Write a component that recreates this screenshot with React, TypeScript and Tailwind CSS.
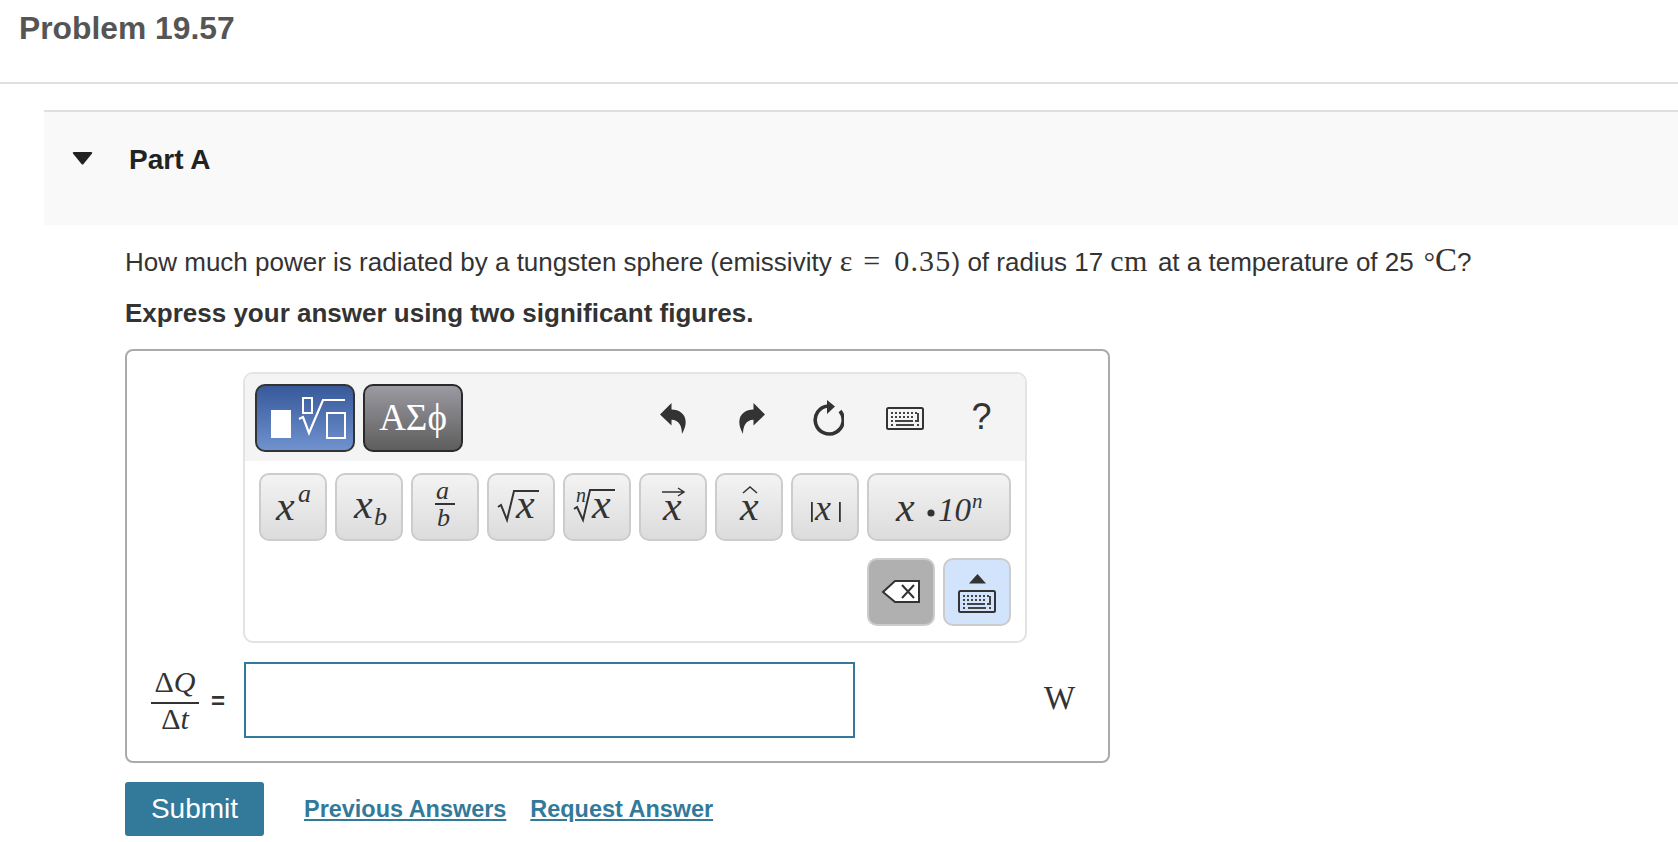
import React from "react";

const Btn = ({ children, w = "w-[68px]", tone = "bg-linear-to-b from-[#f3f3f3] to-[#dcdcdc]" }: { children: React.ReactNode; w?: string; tone?: string }) => (
  <div className={`${w} h-[68px] shrink-0 rounded-[10px] border-2 border-[#cccccc] overflow-hidden ${tone}`}>{children}</div>
);

const MathSvg = ({ children, w = 64 }: { children: React.ReactNode; w?: number }) => (
  <svg width={w} height={64} viewBox={`0 0 ${w} 64`} className="block font-['Liberation_Serif',serif] fill-[#333333]">
    {children}
  </svg>
);

const T = ({ x, y, size, children, italic = true }: { x: number; y: number; size: number; children: React.ReactNode; italic?: boolean }) => (
  <text x={x} y={y} fontSize={size} fontStyle={italic ? "italic" : "normal"}>{children}</text>
);

const Keyboard = ({ w = 38, h = 23 }: { w?: number; h?: number }) => (
  <svg width={w} height={h} viewBox="0 0 38 23" className="block">
    <rect x="1" y="1" width="36" height="21" rx="1.5" fill="none" stroke="#333" strokeWidth="2" />
    <path d="M5 6h2M9 6h2M13 6h2M17 6h2M21 6h2M25 6h2M29 6h2M5 10h2M9 10h2M13 10h2M17 10h2M21 10h2M25 10h2M5 14h2M9 14h18M29 14h3V6M5 18h2M10 18h18M31 18h2" stroke="#444" strokeWidth="2" fill="none" />
  </svg>
);

const Reply = ({ flip = false }: { flip?: boolean }) => (
  <svg width="28" height="31" viewBox="0 0 28 31" className={flip ? "-scale-x-100" : ""}>
    <path d="M0 11.5L11.5 0V6.5C22 6.5 31 15 22 31C22 23 19 17 11.5 16.7V22.5Z" fill="#333" />
  </svg>
);

export default function App() {
  return (
    <div className="w-full h-[842px] overflow-hidden bg-white font-['Liberation_Sans',Arial,sans-serif] text-[#333333]">
      <header className="h-[84px] border-b-2 border-[#e0e0e0] pl-[19px] pt-[9px]">
        <h1 className="text-[31.8px] leading-[38px] font-bold text-[#555555]">Problem 19.57</h1>
      </header>

      <section className="ml-[44px] mt-[26px]">
        <div className="h-[115px] border-t-2 border-[#e0e0e0] bg-[#f9f9f9] flex items-start pt-[31px]">
          <svg width="21" height="13" viewBox="0 0 21 13" className="ml-[28px] mt-[9px] shrink-0">
            <path d="M1 1.5Q0 0 2 0H19Q21 0 20 1.5L11.5 12Q10.5 13 9.5 12Z" fill="#222" />
          </svg>
          <h2 className="ml-[36px] text-[28px] leading-[34px] font-bold text-[#222222]">Part A</h2>
        </div>

        <div className="pl-[81px]">
          <p className="mt-[19px] h-[36px] text-[26px] leading-[36px] whitespace-nowrap">
            How much power is radiated by a tungsten sphere (emissivity
            <span className="ml-[8px] font-['Liberation_Serif',serif] text-[30px] leading-none">ε</span>
            <span className="ml-[11px] font-['Liberation_Serif',serif] text-[30px] leading-none">=</span>
            <span className="ml-[14px] font-['Liberation_Serif',serif] text-[30px] leading-none tracking-[1.2px]">0.35</span>) of radius 17
            <span className="ml-[7px] font-['Liberation_Serif',serif] text-[30px] leading-none tracking-[0.5px]">cm</span>
            <span className="ml-[10px]">at a temperature of 25</span>
            <span className="ml-[10px] font-['Liberation_Serif',serif] text-[28px] leading-none">°</span>
            <span className="font-['Liberation_Serif',serif] text-[33px] leading-none">C</span>?
          </p>
          <p className="mt-[16px] text-[26px] leading-[34px] font-bold whitespace-nowrap">Express your answer using two significant figures.</p>

          <div className="mt-[19px] w-[985px] h-[414px] rounded-[8px] border-2 border-[#aaaaaa] pt-[21px]">
            <div className="ml-[116px] w-[784px] h-[271px] rounded-[10px] border-2 border-[#e3e3e3] overflow-hidden">
              <div className="h-[87px] bg-[#f4f4f4] flex items-start pt-[10px] pl-[10px] pr-[5px]">
                <div className="w-[100px] h-[68px] rounded-[10px] border-2 border-[#333333] bg-linear-to-b from-[#38599a] to-[#7092cf]">
                  <svg width="96" height="64" viewBox="0 0 96 64" className="block">
                    <rect x="14" y="24" width="20" height="28" fill="#fff" />
                    <rect x="46" y="12" width="9" height="15" fill="none" stroke="#fff" strokeWidth="2" />
                    <path d="M42 33l4-2 6 16 14-33h22" fill="none" stroke="#fff" strokeWidth="2.2" />
                    <rect x="70" y="27" width="18" height="25" fill="none" stroke="#fff" strokeWidth="2" />
                  </svg>
                </div>
                <div className="ml-[8px] w-[100px] h-[68px] rounded-[10px] border-2 border-[#2a2a2a] bg-linear-to-b from-[#9c9aa2] to-[#5e5e5e] flex items-center justify-center font-['Liberation_Serif',serif] text-[37px] text-white">
                  ΑΣϕ
                </div>
                <div className="ml-auto flex h-[68px] text-[#333333]">
                  <div className="w-[77px] flex items-center justify-center"><Reply /></div>
                  <div className="w-[77px] flex items-center justify-center"><Reply flip /></div>
                  <div className="w-[77px] flex items-center justify-center">
                    <svg width="32" height="36" viewBox="0 0 32 36">
                      <path d="M28 11A14 14 0 1 1 16 6" fill="none" stroke="#333" strokeWidth="3.6" />
                      <path d="M15 0L23 6.5L15 14Z" fill="#333" />
                    </svg>
                  </div>
                  <div className="w-[77px] flex items-center justify-center"><Keyboard /></div>
                  <div className="w-[77px] flex items-center justify-center text-[36px] leading-none pb-[2px]">?</div>
                </div>
              </div>

              <div className="pt-[12px] px-[14px]">
                <div className="flex gap-[8px]">
                  <Btn><MathSvg><T x={15} y={45} size={42}>x</T><T x={37} y={27} size={26}>a</T></MathSvg></Btn>
                  <Btn><MathSvg><T x={17} y={43} size={42}>x</T><T x={37} y={50} size={26}>b</T></MathSvg></Btn>
                  <Btn>
                    <MathSvg>
                      <T x={23} y={24} size={26}>a</T>
                      <rect x="22" y="28" width="20" height="2" />
                      <T x={24} y={51} size={26}>b</T>
                    </MathSvg>
                  </Btn>
                  <Btn>
                    <MathSvg>
                      <path d="M9 32l3-2 6 15 7-29h25" fill="none" stroke="#333" strokeWidth="2" />
                      <T x={27} y={43} size={42}>x</T>
                    </MathSvg>
                  </Btn>
                  <Btn>
                    <MathSvg>
                      <path d="M9 34l3-2 6 13 7-30h25" fill="none" stroke="#333" strokeWidth="2" />
                      <T x={11} y={27} size={20}>n</T>
                      <T x={27} y={43} size={42}>x</T>
                    </MathSvg>
                  </Btn>
                  <Btn>
                    <MathSvg>
                      <path d="M21 17h22M37 13l6 4-6 4" fill="none" stroke="#333" strokeWidth="1.5" />
                      <T x={22} y={45} size={42}>x</T>
                    </MathSvg>
                  </Btn>
                  <Btn>
                    <MathSvg>
                      <path d="M26 18l7-6 7 6" fill="none" stroke="#333" strokeWidth="1.5" />
                      <T x={23} y={45} size={42}>x</T>
                    </MathSvg>
                  </Btn>
                  <Btn>
                    <MathSvg>
                      <rect x="18" y="27" width="1.8" height="20" />
                      <T x={22} y={45} size={36}>x</T>
                      <rect x="46" y="27" width="1.8" height="20" />
                    </MathSvg>
                  </Btn>
                  <Btn w="w-[144px]">
                    <MathSvg w={140}>
                      <T x={27} y={46} size={42}>x</T>
                      <circle cx="62" cy="38" r="3.6" />
                      <T x={69} y={46} size={33}>10</T>
                      <T x={103} y={33} size={21}>n</T>
                    </MathSvg>
                  </Btn>
                </div>
                <div className="mt-[17px] flex justify-end gap-[8px]">
                  <Btn tone="bg-[#b0b0b0]">
                    <svg width="64" height="64" viewBox="0 0 64 64" className="block">
                      <path d="M14 32L26 21H50V42H26Z" fill="#fff" stroke="#333" strokeWidth="2" />
                      <path d="M33 25l12 13M45 25L33 38" stroke="#333" strokeWidth="2" fill="none" />
                    </svg>
                  </Btn>
                  <Btn tone="bg-[#d2e4fb]">
                    <div className="flex flex-col items-center pt-[14px]">
                      <svg width="17" height="10" viewBox="0 0 17 10" className="block"><path d="M8.5 0L17 9.5H0Z" fill="#333" /></svg>
                      <div className="mt-[6px]"><Keyboard /></div>
                    </div>
                  </Btn>
                </div>
              </div>
            </div>

            <div className="mt-[19px] flex items-start">
              <div className="w-[117px] pl-[24px] flex items-center h-[75px] font-['Liberation_Serif',serif] text-[30px]">
                <div className="flex flex-col items-center w-[48px]">
                  <div className="leading-[32px] border-b-2 border-[#333333] pb-[4px] w-full text-center whitespace-nowrap">Δ<i>Q</i></div>
                  <div className="leading-[30px]">Δ<i>t</i></div>
                </div>
                <span className="ml-[12px] mt-[3px] font-['Liberation_Sans',sans-serif] font-bold text-[24px]">=</span>
              </div>
              <div className="w-[611px] h-[76px] border-2 border-[#337a9a] bg-white" />
              <div className="pl-[189px] h-[74px] flex items-center font-['Liberation_Serif',serif] text-[33px]">W</div>
            </div>
          </div>

          <div className="mt-[19px] flex items-center">
            <button className="w-[139px] h-[54px] rounded-[3px] bg-[#337a9a] text-white text-[28px]">Submit</button>
            <a className="ml-[40px] mt-[2px] text-[23.45px] font-bold text-[#337a9a] underline">Previous Answers</a>
            <a className="ml-[24px] mt-[2px] text-[23.45px] font-bold text-[#337a9a] underline">Request Answer</a>
          </div>
        </div>
      </section>
    </div>
  );
}
